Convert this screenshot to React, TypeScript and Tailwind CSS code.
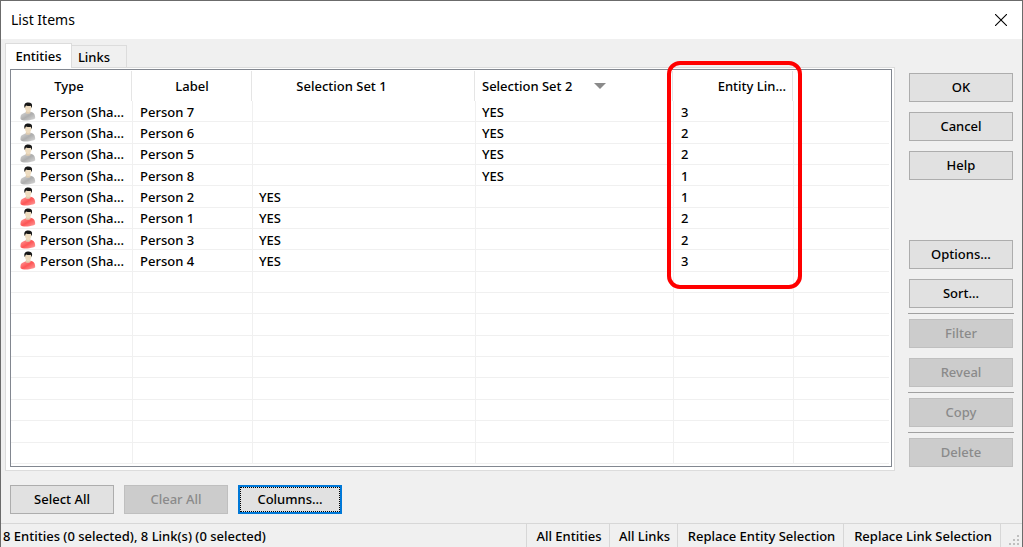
import React from "react";

type Item = { label: string; set1: string; set2: string; links: number; tone: "gray" | "red" };

const items: Item[] = [
  { label: "Person 7", set1: "", set2: "YES", links: 3, tone: "gray" },
  { label: "Person 6", set1: "", set2: "YES", links: 2, tone: "gray" },
  { label: "Person 5", set1: "", set2: "YES", links: 2, tone: "gray" },
  { label: "Person 8", set1: "", set2: "YES", links: 1, tone: "gray" },
  { label: "Person 2", set1: "YES", set2: "", links: 1, tone: "red" },
  { label: "Person 1", set1: "YES", set2: "", links: 2, tone: "red" },
  { label: "Person 3", set1: "YES", set2: "", links: 2, tone: "red" },
  { label: "Person 4", set1: "YES", set2: "", links: 3, tone: "red" },
];

const emptyRows = Array.from({ length: 9 }, (_, i) => i);

function PersonIcon({ tone }: { tone: "gray" | "red" }) {
  const id = "body-" + tone;
  const light = tone === "gray" ? "#dadada" : "#ffa3a3";
  const dark = tone === "gray" ? "#aeaeae" : "#fd5656";
  return (
    <svg width="16" height="19" viewBox="0 0 16 20" preserveAspectRatio="none" className="block shrink-0" aria-hidden="true">
      <defs>
        <linearGradient id={id} x1="0" y1="0" x2="1" y2="1">
          <stop offset="0" stopColor={light} />
          <stop offset="0.5" stopColor={dark} />
          <stop offset="1" stopColor={light} />
        </linearGradient>
      </defs>
      <path d="M.5 18c-.2-3.400.4-5 2.600-5.800l2.600-1.400 5-.6c3 .6 4.600 2.600 4.500 6.900-1 1.300-3 1.500-5.800 2.100-3 .6-7.600.6-8.900-1.200z" fill={`url(#${id})`} />
      <path d="M6 9h4l.6 2c-.6 1.500-3.400 2.100-5 .6z" fill="#e0cdb2" />
      <path d="M4.700 4.800c0-2 1.300-3 3.400-3s3.500 1.200 3.400 3.300c-.1 3-1.300 5.600-3.200 5.600-2 0-3.600-2.800-3.600-5.900z" fill="#eedcc0" />
      <path d="M4.600 6C3.700 2.700 4.900.6 8 .5c3-.1 4.600 1.500 4 4.300l-.6 1.700-.5-2.500c-1.500.4-3.500.1-4.700-.4-.8.500-1 1.200-1.100 2.400z" fill="#171717" />
    </svg>
  );
}

function DialogButton({ children, disabled = false, focused = false }: { children: React.ReactNode; disabled?: boolean; focused?: boolean }) {
  const base = "relative h-[29px] w-[104px] shrink-0 whitespace-nowrap text-center leading-none outline-none";
  const look = disabled
    ? "border border-[#bfbfbf] bg-[#cccccc] text-[#8a8a8a]"
    : focused
      ? "border-2 border-[#0078d7] bg-[#e1e1e1]"
      : "border border-[#adadad] bg-[#e1e1e1]";
  return (
    <button type="button" disabled={disabled} className={`${base} ${look}`}>
      {children}
      {focused && <span className="absolute inset-0 border border-dotted border-black" />}
    </button>
  );
}

function HeaderCell({ children, className }: { children?: React.ReactNode; className: string }) {
  return (
    <th scope="col" className="h-[30px] p-0 align-top font-medium">
      <div className={`mr-px flex h-[30px] items-center border-r border-[#e5e5e5] whitespace-nowrap ${className}`}>{children}</div>
    </th>
  );
}

const cell = "overflow-hidden border-r border-b border-[#f0f0f0] p-0 pt-0.5 pl-[7px] leading-none whitespace-nowrap";
const setCell = "overflow-hidden border-r border-b border-[#f0f0f0] p-0 pt-0.5 pl-1.5 leading-none whitespace-nowrap";
const lastCell = "border-b border-[#f0f0f0] p-0";

function Divider() {
  return <hr className="-mx-px h-px border-0 bg-[#a0a0a0]" />;
}

export default function App() {
  return (
    <div className="flex min-h-screen flex-col border border-b-0 border-[#6b6b6b] bg-[#f0f0f0] font-['Noto_Sans','Open_Sans',sans-serif] text-[13px] leading-none font-medium text-black">
      <header className="flex h-[38px] items-center justify-between bg-white pr-[15px] pl-2.5">
        <h1 className="text-[14px] font-normal">List Items</h1>
        <button type="button" aria-label="Close">
          <svg width="12" height="12" viewBox="0 0 12 12" className="block">
            <path d="M0 0L12 12M12 0L0 12" stroke="#000" strokeWidth="1.1" />
          </svg>
        </button>
      </header>

      <main className="flex grow pr-[9px] pl-1">
        <div className="flex grow flex-col pt-1">
          <div role="tablist" className="flex h-6 items-end">
            <button type="button" role="tab" aria-selected="true" className="z-10 -mb-px h-[25px] w-[67px] border border-b-0 border-[#dcdcdc] bg-white">
              Entities
            </button>
            <button type="button" role="tab" aria-selected="false" className="h-[22px] w-[55px] border border-b-0 border-l-0 border-[#dcdcdc] pt-0.5 pr-2.5">
              Links
            </button>
          </div>
          <section className="flex grow flex-col border border-[#dcdcdc] bg-white pt-px pr-0.5 pb-[3px] pl-1">
            <div className="relative flex h-[398px] flex-col border border-[#828790] pt-px pr-0.5 pb-0.5">
              <table className="h-full w-full table-fixed border-separate border-spacing-0">
                <colgroup>
                  <col className="w-[122px]" />
                  <col className="w-[120px]" />
                  <col className="w-[223px]" />
                  <col className="w-[198px]" />
                  <col className="w-[120px]" />
                  <col />
                </colgroup>
                <thead>
                  <tr>
                    <HeaderCell className="justify-center pr-1">Type</HeaderCell>
                    <HeaderCell className="justify-center">Label</HeaderCell>
                    <HeaderCell className="justify-center pr-11">Selection Set 1</HeaderCell>
                    <HeaderCell className="gap-[22px] pl-1.5">
                      Selection Set 2
                      <svg width="12" height="6" viewBox="0 0 12 6" aria-hidden="true">
                        <path d="M0 0H12L6 6Z" fill="#8a8a8a" />
                      </svg>
                    </HeaderCell>
                    <HeaderCell className="justify-end pr-1.5">Entity Lin...</HeaderCell>
                    <th className="p-0" aria-label="Empty" />
                  </tr>
                </thead>
                <tbody>
                  {items.map((item) => (
                    <tr key={item.label} className="h-[21px]">
                      <td className="overflow-hidden border-r border-b border-[#f0f0f0] p-0 pl-[9px] whitespace-nowrap">
                        <div className="flex items-center gap-1">
                          <PersonIcon tone={item.tone} />
                          <span className="pt-0.5">Person (Sha...</span>
                        </div>
                      </td>
                      <td className={cell}>{item.label}</td>
                      <td className={setCell}>{item.set1}</td>
                      <td className={setCell}>{item.set2}</td>
                      <td className={cell}>{item.links}</td>
                      <td className={lastCell} />
                    </tr>
                  ))}
                  {emptyRows.map((row) => (
                    <tr key={row} className="h-[21px]">
                      <td className={cell} />
                      <td className={cell} />
                      <td className={cell} />
                      <td className={cell} />
                      <td className={cell} />
                      <td className={lastCell} />
                    </tr>
                  ))}
                </tbody>
              </table>
              <div className="pointer-events-none absolute -top-[9px] left-[656px] h-[228px] w-[135px] rounded-[13px] border-4 border-[#ff0000]" />
            </div>
          </section>
          <div className="flex gap-2.5 pt-[14px] pb-[9px] pl-[5px]">
            <DialogButton>Select All</DialogButton>
            <DialogButton disabled>Clear All</DialogButton>
            <DialogButton focused>Columns...</DialogButton>
          </div>
        </div>

        <aside className="ml-[14px] flex w-[104px] shrink-0 flex-col pt-[34px]">
          <div className="flex flex-col gap-2.5">
            <DialogButton>OK</DialogButton>
            <DialogButton>Cancel</DialogButton>
            <DialogButton>Help</DialogButton>
          </div>
          <div className="mt-[60px] mb-[5px] flex flex-col gap-2.5">
            <DialogButton>Options...</DialogButton>
            <DialogButton>Sort...</DialogButton>
          </div>
          <Divider />
          <div className="my-[5px] flex flex-col gap-2.5">
            <DialogButton disabled>Filter</DialogButton>
            <DialogButton disabled>Reveal</DialogButton>
          </div>
          <Divider />
          <div className="my-[5px]">
            <DialogButton disabled>Copy</DialogButton>
          </div>
          <Divider />
          <div className="mt-[5px]">
            <DialogButton disabled>Delete</DialogButton>
          </div>
        </aside>
      </main>

      <footer className="flex h-[25px] items-stretch border-t border-[#d7d7d7] whitespace-nowrap">
        <span className="flex grow items-center pl-0.5">8 Entities (0 selected), 8 Link(s) (0 selected)</span>
        <button type="button" className="w-[83px] border-l border-[#d7d7d7] pl-0.5">All Entities</button>
        <button type="button" className="w-[68px] border-l border-[#d7d7d7] pl-0.5">All Links</button>
        <button type="button" className="w-[166px] border-l border-[#d7d7d7] pl-0.5">Replace Entity Selection</button>
        <button type="button" className="w-[157px] border-l border-[#d7d7d7] pl-0.5">Replace Link Selection</button>
        <span className="flex w-[22px] items-end justify-end border-l border-[#d7d7d7] pr-0.5 pb-0.5">
          <svg width="11" height="11" viewBox="0 0 11 11" fill="#bfbfbf" aria-hidden="true">
            <path d="M8 0h2v2h-2zM4 4h2v2h-2zM8 4h2v2h-2zM0 8h2v2h-2zM4 8h2v2h-2zM8 8h2v2h-2z" />
          </svg>
        </span>
      </footer>
    </div>
  );
}
